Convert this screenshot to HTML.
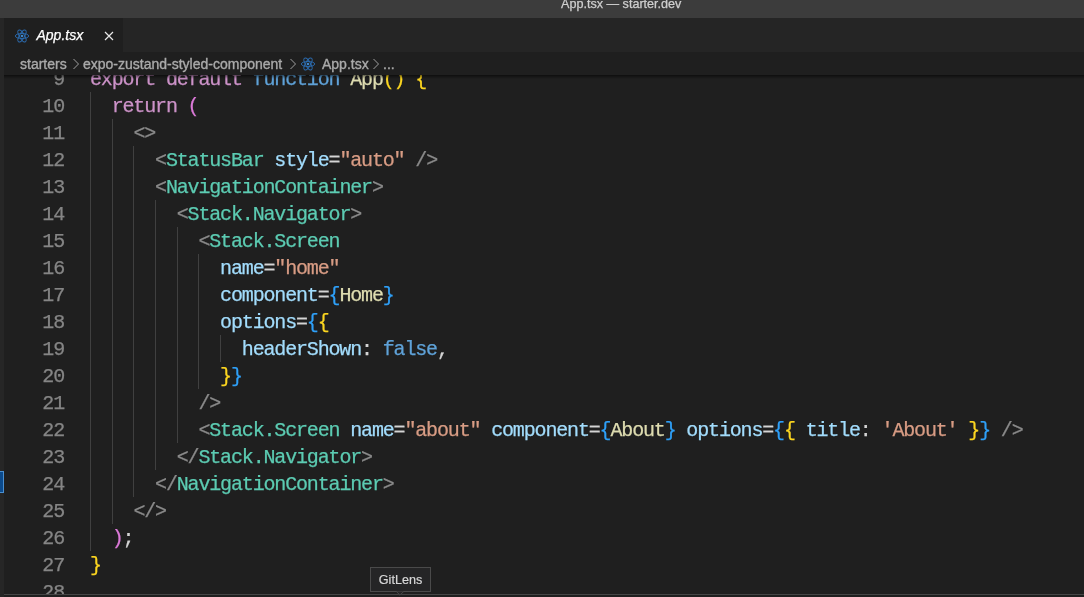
<!DOCTYPE html>
<html><head><meta charset="utf-8">
<style>
*{margin:0;padding:0;box-sizing:border-box}
html,body{width:1084px;height:597px;overflow:hidden;background:#1f1f1f}
body{position:relative;-webkit-font-smoothing:antialiased;font-family:"Liberation Sans",sans-serif}
#title{will-change:transform;position:absolute;left:0;top:0;width:1084px;height:18px;background:#3c3c3c}
#title span{-webkit-text-stroke:0.25px currentColor;position:absolute;left:561px;top:-3px;font-size:12.6px;line-height:14px;color:#d0d0d0;white-space:nowrap}
#leftstrip{position:absolute;left:0;top:18px;width:4px;height:579px;background:#262626}
#tabbar{will-change:transform;position:absolute;left:4px;top:18px;width:1080px;height:34px;background:#252525}
#tab{position:absolute;left:0;top:0;width:119px;height:34px;background:#1f1f1f}
.react{position:absolute}
.chev{position:absolute;top:6px}
#tab .name{-webkit-text-stroke:0.25px currentColor;position:absolute;left:32.5px;top:9px;font-size:14px;line-height:16px;font-style:italic;color:#fff}
#bc{will-change:transform;position:absolute;left:4px;top:52px;width:1080px;height:23px;background:#1f1f1f;z-index:5}
#bcshadow{position:absolute;left:4px;top:75px;width:1080px;height:4px;background:linear-gradient(rgba(0,0,0,0.55),rgba(0,0,0,0.3) 40%,rgba(0,0,0,0));z-index:5}
#bc span{-webkit-text-stroke:0.35px currentColor;position:absolute;top:4px;font-size:14px;line-height:16px;color:#aaa;white-space:nowrap}
#editor{will-change:transform;position:absolute;left:4px;top:75px;width:1080px;height:519px;overflow:hidden;background:#1f1f1f}
.ln{-webkit-text-stroke:0.25px currentColor;position:absolute;left:0;width:60px;text-align:right;font-family:"Liberation Mono",monospace;font-size:20px;letter-spacing:-1.16px;color:#858585;height:27px;line-height:27px}
.cl{-webkit-text-stroke:0.25px currentColor;position:absolute;left:86px;white-space:pre;font-family:"Liberation Mono",monospace;font-size:20px;letter-spacing:-1.16px;color:#d4d4d4;height:27px;line-height:27px}
.g{position:absolute;width:1px;background:#404040}
.k{color:#cc92c8}.b{color:#5fa2d8}.f{color:#dedcb0}.y{color:#fcd620}.p{color:#dc7ad8}.bl{color:#2fa0f8}
.t{color:#8a8a8a}.c{color:#5ccbb2}.a{color:#a2dcfc}.s{color:#d89c84}
#bottomline{position:absolute;left:4px;top:594px;width:1080px;height:1px;background:#454545}
#bluebox{position:absolute;left:0;top:471px;width:4px;height:22px;background:#0b4a8c;border:1px solid #4a8fd0;border-left:none}
#tip{will-change:transform;position:absolute;left:370px;top:567px;width:61px;height:25px;background:#252526;border:1px solid #4a4a4a;font-size:12.6px;color:#d8d8d8;text-align:center;line-height:25px;z-index:6;-webkit-text-stroke:0.2px currentColor}
#tiparrow{position:absolute;left:394px;top:590px;z-index:7}
</style></head><body>
<div id="title"><span>App.tsx — starter.dev</span></div>
<div id="leftstrip"></div>
<div id="tabbar"><div id="tab">
<svg class="react" style="left:11px;top:11px" width="14" height="14" viewBox="-11.5 -10.23 23 20.46"><g fill="none" stroke="#2c6db2" stroke-width="1.5"><circle r="2.2" fill="#3f86c8" stroke="none"/><ellipse rx="11" ry="4.2"/><ellipse rx="11" ry="4.2" transform="rotate(60)"/><ellipse rx="11" ry="4.2" transform="rotate(120)"/></g></svg>
<span class="name">App.tsx</span>
<svg style="position:absolute;left:100px;top:13px" width="10" height="10" viewBox="0 0 10 10"><path d="M1 1L9 9M9 1L1 9" stroke="#e8e8e8" stroke-width="1.2"/></svg>
</div></div>
<div id="bc">
<span style="left:16px">starters</span>
<svg class="chev" style="left:68px" width="8" height="12" viewBox="0 0 8 12"><path d="M1.5 1L6.5 6L1.5 11" fill="none" stroke="#a0a0a0" stroke-width="1"/></svg>
<span style="left:79px">expo-zustand-styled-component</span>
<svg class="chev" style="left:285px" width="8" height="12" viewBox="0 0 8 12"><path d="M1.5 1L6.5 6L1.5 11" fill="none" stroke="#a0a0a0" stroke-width="1"/></svg>
<svg class="react" style="left:297px;top:5px" width="14" height="14" viewBox="-11.5 -10.23 23 20.46"><g fill="none" stroke="#2c6db2" stroke-width="1.5"><circle r="2.2" fill="#3f86c8" stroke="none"/><ellipse rx="11" ry="4.2"/><ellipse rx="11" ry="4.2" transform="rotate(60)"/><ellipse rx="11" ry="4.2" transform="rotate(120)"/></g></svg>
<span style="left:318px">App.tsx</span>
<svg class="chev" style="left:368px" width="8" height="12" viewBox="0 0 8 12"><path d="M1.5 1L6.5 6L1.5 11" fill="none" stroke="#a0a0a0" stroke-width="1"/></svg>
<span style="left:379px">...</span>
</div>
<div id="bcshadow"></div>
<div id="editor">
<div class="ln" style="top:-9px">9</div>
<div class="cl" style="top:-9px"><span class="k">export</span> <span class="k">default</span> <span class="b">function</span> <span class="f">App</span><span class="y">()</span> <span class="y">{</span></div>
<div class="ln" style="top:18px">10</div>
<div class="cl" style="top:18px">  <span class="k">return</span> <span class="p">(</span></div>
<div class="ln" style="top:45px">11</div>
<div class="cl" style="top:45px">    <span class="t">&lt;&gt;</span></div>
<div class="ln" style="top:72px">12</div>
<div class="cl" style="top:72px">      <span class="t">&lt;</span><span class="c">StatusBar</span> <span class="a">style</span>=<span class="s">"auto"</span> <span class="t">/&gt;</span></div>
<div class="ln" style="top:99px">13</div>
<div class="cl" style="top:99px">      <span class="t">&lt;</span><span class="c">NavigationContainer</span><span class="t">&gt;</span></div>
<div class="ln" style="top:126px">14</div>
<div class="cl" style="top:126px">        <span class="t">&lt;</span><span class="c">Stack.Navigator</span><span class="t">&gt;</span></div>
<div class="ln" style="top:153px">15</div>
<div class="cl" style="top:153px">          <span class="t">&lt;</span><span class="c">Stack.Screen</span></div>
<div class="ln" style="top:180px">16</div>
<div class="cl" style="top:180px">            <span class="a">name</span>=<span class="s">"home"</span></div>
<div class="ln" style="top:207px">17</div>
<div class="cl" style="top:207px">            <span class="a">component</span>=<span class="bl">{</span><span class="f">Home</span><span class="bl">}</span></div>
<div class="ln" style="top:234px">18</div>
<div class="cl" style="top:234px">            <span class="a">options</span>=<span class="bl">{</span><span class="y">{</span></div>
<div class="ln" style="top:261px">19</div>
<div class="cl" style="top:261px">              <span class="a">headerShown</span>: <span class="b">false</span>,</div>
<div class="ln" style="top:288px">20</div>
<div class="cl" style="top:288px">            <span class="y">}</span><span class="bl">}</span></div>
<div class="ln" style="top:315px">21</div>
<div class="cl" style="top:315px">          <span class="t">/&gt;</span></div>
<div class="ln" style="top:342px">22</div>
<div class="cl" style="top:342px">          <span class="t">&lt;</span><span class="c">Stack.Screen</span> <span class="a">name</span>=<span class="s">"about"</span> <span class="a">component</span>=<span class="bl">{</span><span class="f">About</span><span class="bl">}</span> <span class="a">options</span>=<span class="bl">{</span><span class="y">{</span> <span class="a">title</span>: <span class="s">'About'</span> <span class="y">}</span><span class="bl">}</span> <span class="t">/&gt;</span></div>
<div class="ln" style="top:369px">23</div>
<div class="cl" style="top:369px">        <span class="t">&lt;/</span><span class="c">Stack.Navigator</span><span class="t">&gt;</span></div>
<div class="ln" style="top:396px">24</div>
<div class="cl" style="top:396px">      <span class="t">&lt;/</span><span class="c">NavigationContainer</span><span class="t">&gt;</span></div>
<div class="ln" style="top:423px">25</div>
<div class="cl" style="top:423px">    <span class="t">&lt;/&gt;</span></div>
<div class="ln" style="top:450px">26</div>
<div class="cl" style="top:450px">  <span class="p">)</span>;</div>
<div class="ln" style="top:477px">27</div>
<div class="cl" style="top:477px"><span class="y">}</span></div>
<div class="ln" style="top:504px">28</div>
<div class="g" style="left:86px;top:17px;height:459px"></div>
<div class="g" style="left:108px;top:44px;height:405px"></div>
<div class="g" style="left:129px;top:71px;height:351px"></div>
<div class="g" style="left:151px;top:125px;height:270px"></div>
<div class="g" style="left:173px;top:152px;height:216px"></div>
<div class="g" style="left:194px;top:179px;height:135px"></div>
<div class="g" style="left:216px;top:260px;height:27px"></div>
</div>
<div id="bottomline"></div>
<div id="bluebox"></div>
<div id="tip">GitLens</div>
<svg id="tiparrow" width="12" height="7" viewBox="0 0 12 7"><path d="M0 1.5H2L6 5.5L10 1.5H12" fill="#252526" stroke="none"/><path d="M0.5 1.5H2.3L6 5.2L9.7 1.5H11.5" fill="none" stroke="#4a4a4a" stroke-width="1"/></svg>
</body></html>
